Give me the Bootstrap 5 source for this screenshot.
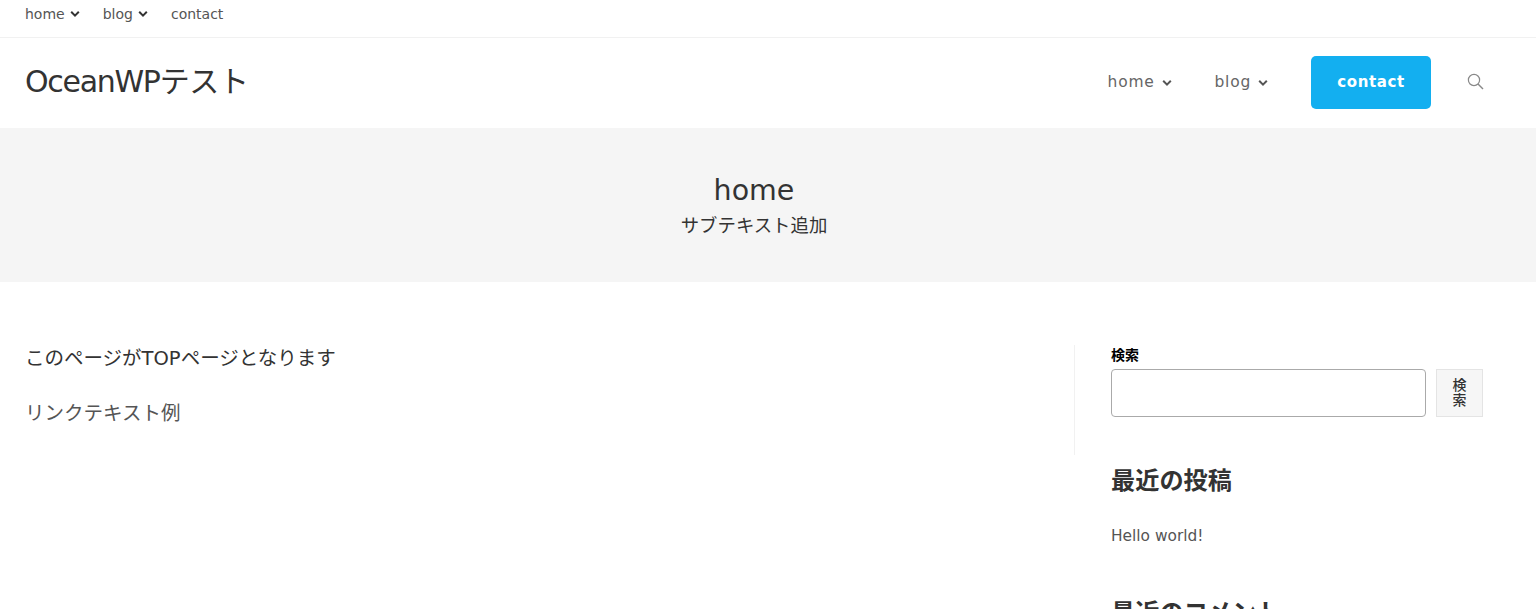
<!DOCTYPE html>
<html lang="ja">
<head>
<meta charset="utf-8">
<title>OceanWPテスト</title>
<link href="https://cdn.jsdelivr.net/npm/bootstrap@5.3.0/dist/css/bootstrap.min.css" rel="stylesheet">
<style>
html,body{overflow:hidden;height:609px}
body{font-family:"DejaVu Sans","Noto Sans CJK JP",sans-serif;color:#333;background:#fff}
.wrap-x{padding-left:25px;padding-right:53px}
.top-strip{height:38px;border-bottom:1px solid #f1f1f1;font-size:14px;gap:23px;color:#555;padding-bottom:9px}
.top-item{display:flex;align-items:center;gap:5px;color:#555;text-decoration:none}
.site-head{height:90px}
.brand-name{font-size:30px;color:#333;font-weight:400;text-decoration:none;letter-spacing:-.3px;padding-bottom:4px}
.brand-latin{letter-spacing:-1.3px}
.head-link{font-size:15.5px;letter-spacing:.75px;color:#666;text-decoration:none;display:flex;align-items:center;gap:7px}
.head-nav{gap:43px;margin-right:-1px}
.cta-btn{width:120px;height:53px;background:#13aff0;border:0;border-radius:5px;color:#fff;font-weight:700;font-size:15px;letter-spacing:.6px;display:flex;align-items:center;justify-content:center;text-decoration:none;margin-bottom:2px}
.search-ico{margin-left:-7px;margin-bottom:4px}
.title-band{height:154px;background:#f5f5f5;padding-right:28px}
.band-head{font-size:28.5px;font-weight:400;line-height:1.2;margin:0;color:#333;padding-top:46px}
.band-sub{font-size:18.4px;color:#333;line-height:1.3;margin-top:6px}
.body-area{padding-top:64px}
.main-col{width:1049px;flex:none;font-size:19.5px}
.main-col p{margin:0 0 29px;line-height:26px}
.main-link{color:#555;text-decoration:none}
.side-col{width:409px;flex:none;margin-top:-1px}
.side-top{border-left:1px solid #f1f1f1;padding-left:36px;height:110px}
.side-rest{padding-left:37px}
.field-label{font-size:14px;font-weight:700;color:#000;line-height:20px;display:block;margin-bottom:4px}
.search-input{width:315px;flex:none;height:48px;border:1px solid #aaa;border-radius:4px}
.search-btn{width:47px;height:48px;background:#f6f6f6;border:1px solid #e4e4e4;font-size:14px;font-weight:500;line-height:15px;color:#333;padding:0 10px;margin-left:10px}
.side-head{font-size:24.2px;font-weight:700;color:#333;margin:0;line-height:32px}
.side-head-first{margin-top:10px}
.side-head-next{margin-top:50px}
.side-text{font-size:15.4px;color:#555;text-decoration:none;line-height:22px;display:block;margin-top:28px}
</style>
</head>
<body>
<div class="top-strip wrap-x d-flex align-items-center">
  <a class="top-item" href="#">home <svg width="10" height="8" viewBox="0 0 10 8"><path d="M1.2 1.8 5 5.6l3.8-3.8" fill="none" stroke="#333" stroke-width="2"/></svg></a>
  <a class="top-item" href="#">blog <svg width="10" height="8" viewBox="0 0 10 8"><path d="M1.2 1.8 5 5.6l3.8-3.8" fill="none" stroke="#333" stroke-width="2"/></svg></a>
  <a class="top-item" href="#">contact</a>
</div>
<header class="site-head wrap-x d-flex align-items-center justify-content-between">
  <a class="brand-name" href="#"><span class="brand-latin">OceanWP</span>テスト</a>
  <nav class="head-nav d-flex align-items-center">
    <a class="head-link" href="#">home <svg width="10" height="8" viewBox="0 0 10 8"><path d="M1.2 1.8 5 5.6l3.8-3.8" fill="none" stroke="#555" stroke-width="2"/></svg></a>
    <a class="head-link" href="#">blog <svg width="10" height="8" viewBox="0 0 10 8"><path d="M1.2 1.8 5 5.6l3.8-3.8" fill="none" stroke="#555" stroke-width="2"/></svg></a>
    <a class="cta-btn" href="#">contact</a>
    <a class="search-ico" href="#" aria-label="search"><svg class="d-block" width="17" height="17" viewBox="0 0 17 17"><circle cx="7" cy="7" r="5.6" fill="none" stroke="#888" stroke-width="1.2"/><path d="M11 11l5 5" stroke="#888" stroke-width="1.4"/></svg></a>
  </nav>
</header>
<section class="title-band text-center">
  <h1 class="band-head">home</h1>
  <div class="band-sub">サブテキスト追加</div>
</section>
<div class="body-area wrap-x d-flex">
  <main class="main-col">
    <p>このページがTOPページとなります</p>
    <p><a class="main-link" href="#">リンクテキスト例</a></p>
  </main>
  <aside class="side-col">
    <div class="side-top">
      <label class="field-label" for="q">検索</label>
      <div class="d-flex">
        <input id="q" class="search-input" type="text">
        <button class="search-btn" type="button">検索</button>
      </div>
    </div>
    <div class="side-rest">
      <h2 class="side-head side-head-first">最近の投稿</h2>
      <a class="side-text" href="#">Hello world!</a>
      <h2 class="side-head side-head-next">最近のコメント</h2>
    </div>
  </aside>
</div>
<script src="https://cdn.jsdelivr.net/npm/bootstrap@5.3.0/dist/js/bootstrap.bundle.min.js"></script>
</body>
</html>
